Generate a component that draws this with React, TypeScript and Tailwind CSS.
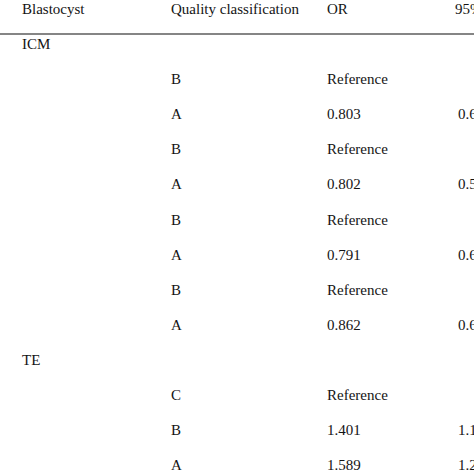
const rows: { a?: string; b?: string; c?: string; d?: string }[] = [
  { b: "B", c: "Reference" },
  { b: "A", c: "0.803", d: "0.669–0.964" },
  { b: "B", c: "Reference" },
  { b: "A", c: "0.802", d: "0.590–1.091" },
  { b: "B", c: "Reference" },
  { b: "A", c: "0.791", d: "0.646–0.968" },
  { b: "B", c: "Reference" },
  { b: "A", c: "0.862", d: "0.632–1.176" },
  { a: "TE" },
  { b: "C", c: "Reference" },
  { b: "B", c: "1.401", d: "1.137–1.727" },
  { b: "A", c: "1.589", d: "1.258–2.007" },
];

const cols = "grid grid-cols-[149px_156px_128px_1fr] pl-[22px] whitespace-nowrap";

export default function App() {
  return (
    <div
      className="w-[474px] h-[474px] overflow-hidden bg-white text-[#141414] text-[15px]"
      style={{ fontFamily: '"Liberation Serif", "Times New Roman", serif' }}
    >
      {/* header */}
      <div className={`${cols} h-[35px] border-b-2 border-[#858585] leading-[18px]`}>
        <div>Blastocyst</div>
        <div>Quality classification</div>
        <div>OR</div>
        <div>95% CI</div>
      </div>

      {/* body */}
      <div className={`${cols} h-[27.2px] leading-[19.4px]`}>
        <div>ICM</div>
      </div>
      {rows.map((r, i) => (
        <div key={i} className={`${cols} h-[35.1px] leading-[35.1px]`}>
          <div>{r.a}</div>
          <div>{r.b}</div>
          <div>{r.c}</div>
          <div className="pl-[3px]">{r.d}</div>
        </div>
      ))}
    </div>
  );
}
